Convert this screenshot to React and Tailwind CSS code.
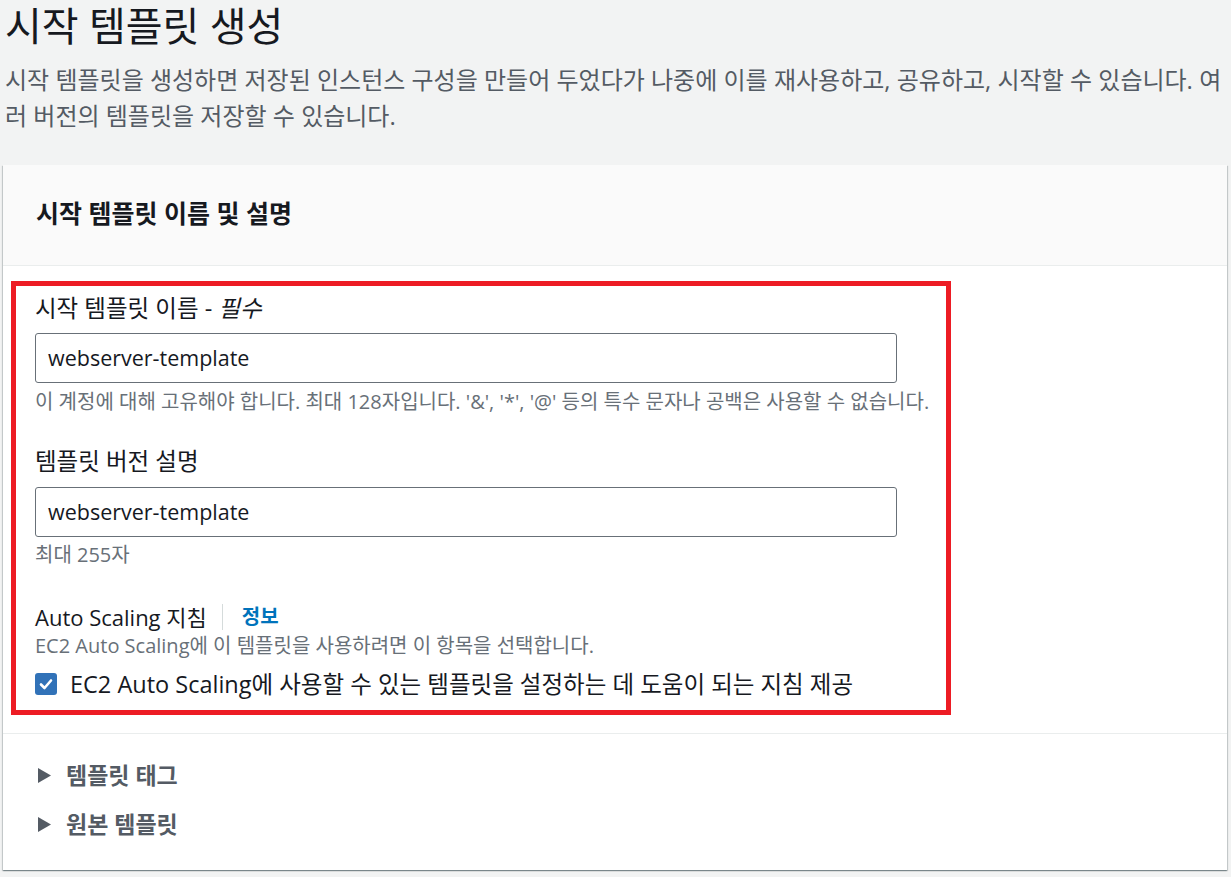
import React from 'react';

const CaretRight = () => (
  <svg width="15" height="17" viewBox="0 0 15 17" className="shrink-0">
    <polygon points="1,1 14,8.5 1,16" fill="#545b64" />
  </svg>
);

const Expander = ({ label }) => (
  <div className="flex items-center gap-[14px] pl-[34px] h-[30px]">
    <CaretRight />
    <span className="text-[23px] font-bold text-[#545b64] leading-[30px]">{label}</span>
  </div>
);

const App = () => {
  return (
    <div className="min-h-[877px] bg-[#f2f3f3] pl-[3px] pr-[4px] font-['Open_Sans','Noto_Sans_CJK_KR',sans-serif] text-[#16191f]">
      {/* Page heading */}
      <h1 className="pl-[2px] text-[40px] leading-[52px] font-normal">시작 템플릿 생성</h1>
      <p className="mt-[10px] pl-[2px] text-[24px] leading-[36px] text-[#545b64]">
        <span className="block whitespace-nowrap">
          시작 템플릿을 생성하면 저장된 인스턴스 구성을 만들어 두었다가 나중에 이를 재사용하고, 공유하고, 시작할 수 있습니다. 여
        </span>
        <span className="block whitespace-nowrap">러 버전의 템플릿을 저장할 수 있습니다.</span>
      </p>

      {/* Card */}
      <div className="mt-[31px] bg-white shadow-[0_1px_1px_0_rgba(0,28,36,0.3),1px_1px_1px_0_rgba(0,28,36,0.15),-1px_1px_1px_0_rgba(0,28,36,0.15)]">
        <div className="bg-[#fafafa] border-b border-[#eaeded] pl-[33px] pt-[32px] pb-[36px]">
          <h2 className="text-[25px] leading-[32px] font-bold">시작 템플릿 이름 및 설명</h2>
        </div>

        <div className="pt-[15px] pb-[18px] pl-[8px] border-b border-[#eaeded]">
          <div className="w-[940px] border-[5px] border-[#ed1c24] pl-[19px] pt-[9px] pb-[13px]">
            <label className="block text-[23.5px] leading-[26px]">
              시작 템플릿 이름 - <i>필수</i>
            </label>
            <div className="mt-[12px] w-[862px] h-[50px] border border-[#687078] rounded-[3px] flex items-center pl-[12px] text-[21.5px]">
              webserver-template
            </div>
            <p className="mt-[8px] text-[20px] leading-[22px] text-[#687078] whitespace-nowrap">
              이 계정에 대해 고유해야 합니다. 최대 128자입니다. '&amp;', '*', '@' 등의 특수 문자나 공백은 사용할 수 없습니다.
            </p>

            <label className="block mt-[35px] text-[23.5px] leading-[26px]">템플릿 버전 설명</label>
            <div className="mt-[13px] w-[862px] h-[50px] border border-[#687078] rounded-[3px] flex items-center pl-[12px] text-[21.5px]">
              webserver-template
            </div>
            <p className="mt-[7px] text-[20px] leading-[22px] text-[#687078]">최대 255자</p>

            <div className="mt-[38px] flex items-center h-[26px]">
              <span className="text-[22px] leading-[26px]">Auto Scaling 지침</span>
              <span className="ml-[15px] mr-[19px] w-px h-[26px] bg-[#d5dbdb]" />
              <span className="text-[20px] font-bold text-[#0073bb]">정보</span>
            </div>
            <p className="mt-[5px] text-[20px] leading-[22px] text-[#687078] whitespace-nowrap">
              EC2 Auto Scaling에 이 템플릿을 사용하려면 이 항목을 선택합니다.
            </p>
            <div className="mt-[14px] flex items-center gap-[13px] h-[26px]">
              <span className="w-[22px] h-[22px] shrink-0 rounded-[3px] bg-[#3172b8] flex items-center justify-center">
                <svg width="16" height="16" viewBox="0 0 16 16">
                  <polyline points="3,8.5 6.5,12 13,4.5" fill="none" stroke="white" strokeWidth="2.6" strokeLinecap="round" strokeLinejoin="round" />
                </svg>
              </span>
              <span className="text-[23.5px] leading-[26px] whitespace-nowrap">
                EC2 Auto Scaling에 사용할 수 있는 템플릿을 설정하는 데 도움이 되는 지침 제공
              </span>
            </div>
          </div>
        </div>

        <div className="pt-[26px] pb-[31px] flex flex-col gap-[19px]">
          <Expander label="템플릿 태그" />
          <Expander label="원본 템플릿" />
        </div>
      </div>
    </div>
  );
};

export default App;
